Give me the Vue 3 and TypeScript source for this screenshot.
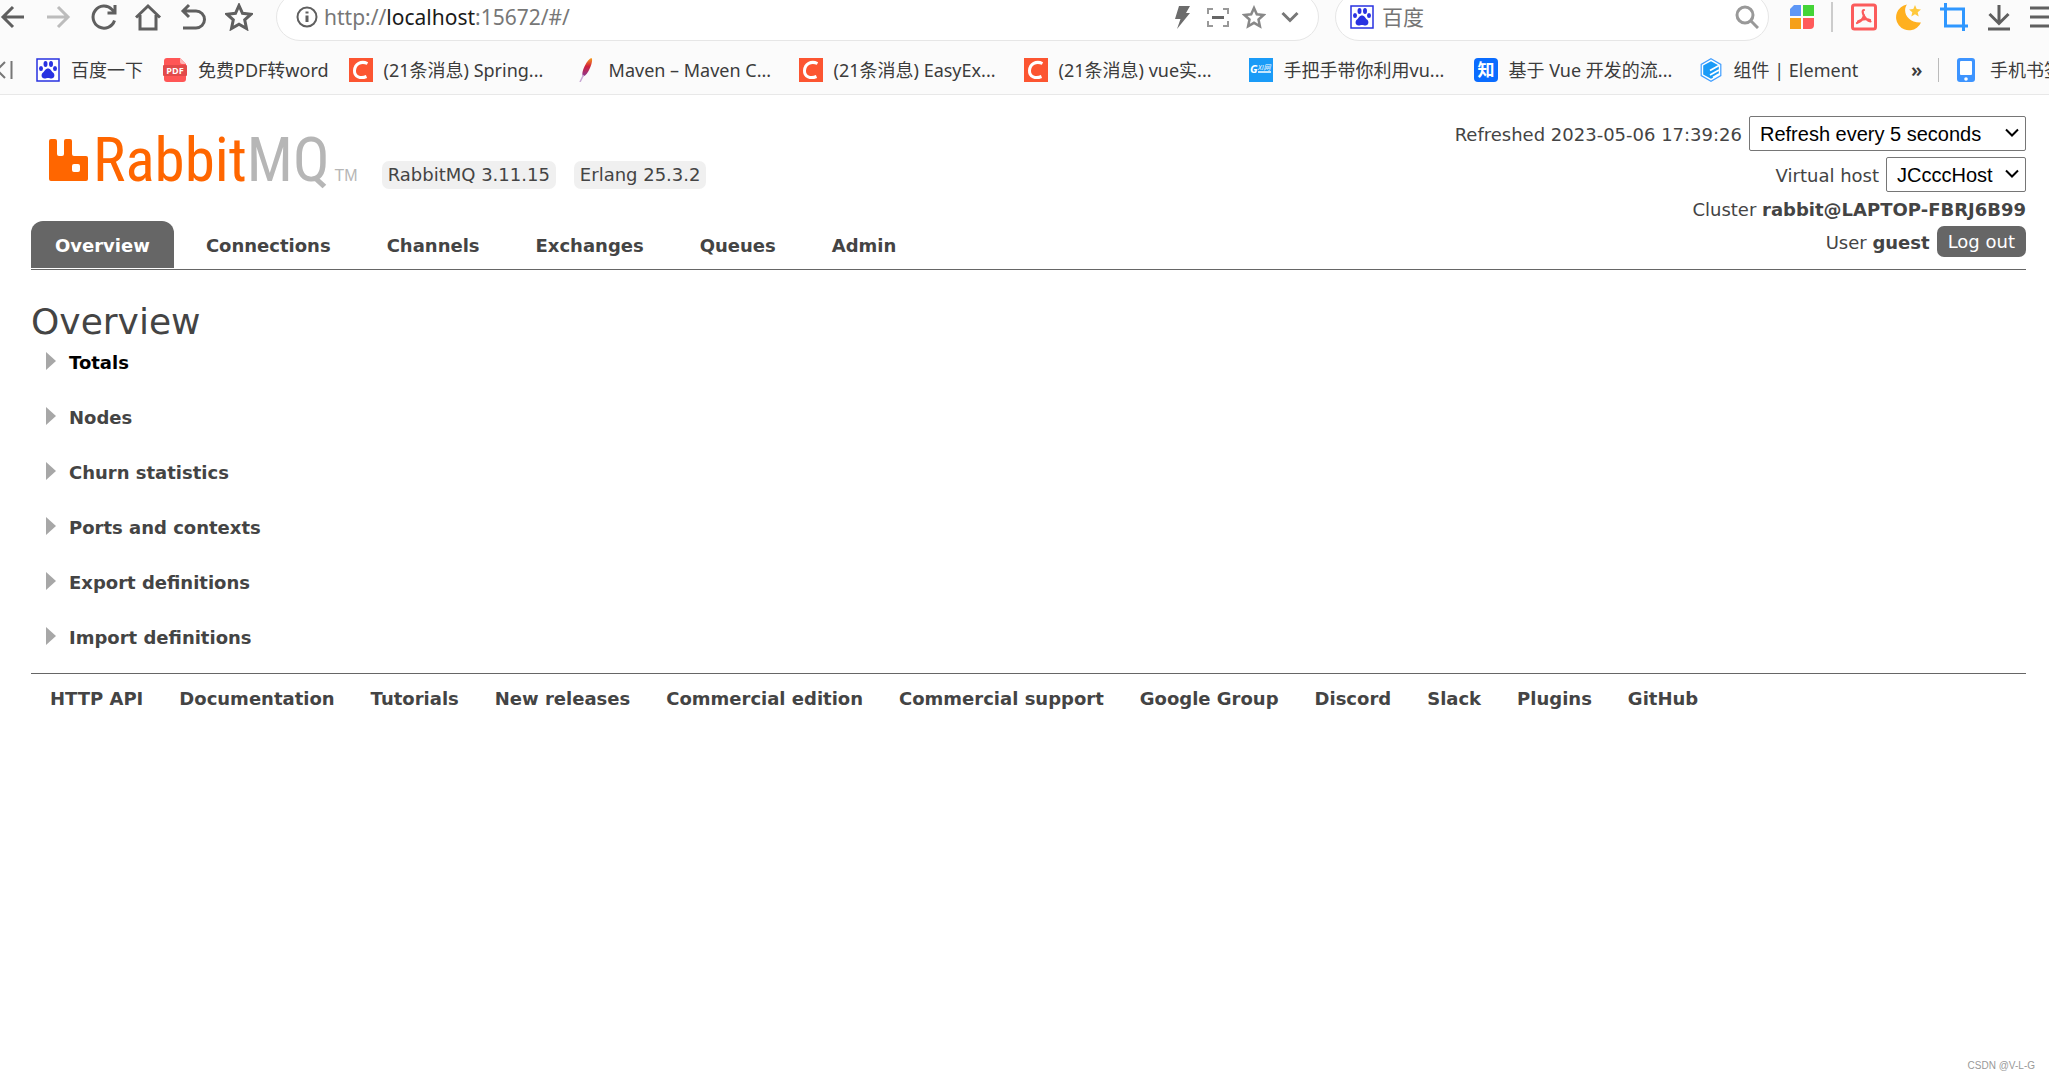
<script setup lang="ts">
import { ref } from 'vue'

interface Bookmark {
  icon: 'baidu' | 'pdf' | 'csdn' | 'feather' | 'gxi' | 'zhihu' | 'element'
  label: string
  wide: boolean
}

const bookmarks: Bookmark[] = [
  { icon: 'baidu', label: '百度一下', wide: false },
  { icon: 'pdf', label: '免费PDF转word', wide: false },
  { icon: 'csdn', label: '(21条消息) Spring...', wide: true },
  { icon: 'feather', label: 'Maven – Maven C...', wide: true },
  { icon: 'csdn', label: '(21条消息) EasyEx...', wide: true },
  { icon: 'csdn', label: '(21条消息) vue实...', wide: true },
  { icon: 'gxi', label: '手把手带你利用vu...', wide: true },
  { icon: 'zhihu', label: '基于 Vue 开发的流...', wide: true },
  { icon: 'element', label: '组件 | Element', wide: false },
]

const tabs: string[] = ['Overview', 'Connections', 'Channels', 'Exchanges', 'Queues', 'Admin']
const activeTab = ref('Overview')

const sections: string[] = [
  'Totals',
  'Nodes',
  'Churn statistics',
  'Ports and contexts',
  'Export definitions',
  'Import definitions',
]

const footerLinks: string[] = [
  'HTTP API',
  'Documentation',
  'Tutorials',
  'New releases',
  'Commercial edition',
  'Commercial support',
  'Google Group',
  'Discord',
  'Slack',
  'Plugins',
  'GitHub',
]

const refresh = ref('Refresh every 5 seconds')
const vhost = ref('JCcccHost')
</script>

<template>
  <div class="browser">
    <div class="toolbar">
      <div class="nav-buttons">
        <button type="button" aria-label="Back">
          <svg width="28" height="28" viewBox="0 0 28 28" class="line"><path d="M13 4 3 14l10 10M3 14h21" /></svg>
        </button>
        <button type="button" aria-label="Forward" class="faded">
          <svg width="28" height="28" viewBox="0 0 28 28" class="line"><path d="M13 4l10 10-10 10M23 14H2" /></svg>
        </button>
        <button type="button" aria-label="Reload">
          <svg width="28" height="28" viewBox="0 0 28 28" class="line"><path d="M24.500 17.500A11 11 0 1 1 22 6.500l2 2M25 2v8H17.500" /></svg>
        </button>
        <button type="button" aria-label="Home">
          <svg width="28" height="28" viewBox="0 0 28 28" class="line"><path d="M1 14.500 13 3l12 11.500M5 12v14h16V12" /></svg>
        </button>
        <button type="button" aria-label="Undo">
          <svg width="28" height="28" viewBox="0 0 28 28" class="line"><path d="M9 2 3 8l6 6M3 8h13a8.500 8.500 0 0 1 0 17H3" /></svg>
        </button>
        <button type="button" aria-label="Favourites">
          <svg width="28" height="28" viewBox="0 0 28 28" class="line"><path d="M14 2.500l3.500 7.800 8.500.9-6.300 5.700 1.800 8.600L14 21.200l-7.500 4.300 1.800-8.600L2 11.200l8.500-.9z" /></svg>
        </button>
      </div>

      <div class="address">
        <svg width="22" height="22" viewBox="0 0 22 22" class="line"><circle cx="11" cy="11" r="9.500" style="stroke-width: 2" /><path d="M11 9.500V16M11 5.500v2" /></svg>
        <div class="url" role="textbox" aria-label="Address" contenteditable="true" spellcheck="false">http://<b>localhost</b>:15672/#/</div>
        <div class="address-tools">
          <button type="button" aria-label="Fast mode">
            <svg width="24" height="24" viewBox="0 0 24 24" fill="#6c6c6c"><path d="M9 1h11l-4 7h4L7 24l3.500-10H5z" /></svg>
          </button>
          <button type="button" aria-label="Scan">
            <svg width="24" height="24" viewBox="0 0 24 24" fill="none" stroke="#999" stroke-width="2"><path d="M7 4H2v5M17 4h5v5M2 16v5h5M22 16v5h-5" /><path d="M6 12.500h12" stroke="#666" stroke-width="3" /></svg>
          </button>
          <button type="button" aria-label="Add bookmark">
            <svg width="24" height="24" viewBox="0 0 24 24" fill="none" stroke="#888" stroke-width="2.500"><path d="M12 3l2.800 6.300 6.700.7-5 4.500 1.400 6.800L12 17.800l-5.900 3.500 1.400-6.800-5-4.500 6.700-.7z" /></svg>
          </button>
          <button type="button" aria-label="More">
            <svg width="24" height="24" viewBox="0 0 24 24" fill="none" stroke="#777" stroke-width="3"><path d="M4.500 8 12 15.500 19.500 8" /></svg>
          </button>
        </div>
      </div>

      <form class="search" @submit.prevent>
        <svg width="24" height="24" viewBox="0 0 24 24"><rect x="1" y="1" width="22" height="22" fill="#fff" stroke="#2932e1" stroke-width="1.500" /><g fill="#2932e1"><ellipse cx="9.500" cy="6" rx="2" ry="3" /><ellipse cx="15" cy="6" rx="2" ry="3" /><ellipse cx="5" cy="10.500" rx="2" ry="2.500" /><ellipse cx="19" cy="10.500" rx="2" ry="2.500" /><path d="M12 10.500c2.500 0 3.200 2.500 5 4 2.500 2 1.500 6-1.500 6-1.500 0-2-.5-3.500-.5s-2 .5-3.500.5c-3 0-4-4-1.500-6 1.800-1.500 2.500-4 5-4z" /></g></svg>
        <input type="text" aria-label="Search" placeholder="百度" />
        <button type="submit" aria-label="Search">
          <svg width="24" height="24" viewBox="0 0 24 24" fill="none" stroke="#999" stroke-width="3"><circle cx="10" cy="10" r="8" /><path d="M16 16l7 7" /></svg>
        </button>
      </form>

      <div class="extensions">
        <button type="button" aria-label="Apps">
          <svg width="24" height="24" viewBox="0 0 24 24"><path d="M4 0h7v11H0V4z" fill="#5e97f6" /><path d="M13 0h11v11H13z" fill="#44d437" /><path d="M0 13h11v11H0z" fill="#f5a019" /><path d="M13 13h11v7a4 4 0 0 1-4 4h-7z" fill="#ff5a5a" /></svg>
        </button>
        <span class="divider"></span>
        <button type="button" aria-label="PDF">
          <svg width="28" height="28" viewBox="0 0 28 28" fill="none" stroke="#fb5c5c" stroke-width="3"><rect x="2.500" y="2" width="23" height="24" rx="2" /><path d="M14 7c-2 0-1.500 3 0 6 1.500 2.800 4 4.800 6.500 5.500M14 12c-.5 3-3 6.500-7 8M8 18.500c3-2 8-3 12-1.500" stroke-width="2.200" stroke-linecap="round" /></svg>
        </button>
        <button type="button" aria-label="Night mode">
          <svg width="28" height="28" viewBox="0 0 28 28"><path d="M12 1.500C7 8 12 20 26 19.500A13 13 0 1 1 12 1.500z" fill="#ffb01f" /><path d="M20 2l1.700 4 4.300.4-3.300 2.800 1 4.300L20 11.200l-3.700 2.300 1-4.300L14 6.400l4.300-.4z" fill="#ffc93c" /></svg>
        </button>
        <button type="button" aria-label="Screenshot">
          <svg width="28" height="28" viewBox="0 0 28 28" fill="none" stroke="#2f97ff" stroke-width="3"><path d="M0 6h23.500v22M5.500 0v23H28" /></svg>
        </button>
        <button type="button" aria-label="Downloads">
          <svg width="28" height="28" viewBox="0 0 28 28" class="line"><path d="M14 2v18M4.500 11l9.500 9.500 9.500-9.500M3 26h22" /></svg>
        </button>
        <button type="button" aria-label="Menu">
          <svg width="28" height="28" viewBox="0 0 28 28" class="line"><path d="M0 5h28M0 14h28M0 23h28" /></svg>
        </button>
      </div>
    </div>

    <div class="bookmarks">
      <button type="button" class="collapse" aria-label="Collapse bookmarks">
        <svg width="13" height="24" viewBox="0 0 13 24" fill="none" stroke="#777" stroke-width="2"><path d="M5 4-3 12l8 8M11.500 3v18" /></svg>
      </button>
      <div class="bookmark-list">
        <a v-for="(item, i) in bookmarks" :key="i" href="#" :class="{ wide: item.wide }">
          <svg v-if="item.icon === 'baidu'" width="24" height="24" viewBox="0 0 24 24"><rect x="1" y="1" width="22" height="22" fill="#fff" stroke="#2932e1" stroke-width="1.500" /><g fill="#2932e1"><ellipse cx="9.500" cy="6" rx="2" ry="3" /><ellipse cx="15" cy="6" rx="2" ry="3" /><ellipse cx="5" cy="10.500" rx="2" ry="2.500" /><ellipse cx="19" cy="10.500" rx="2" ry="2.500" /><path d="M12 10.500c2.500 0 3.200 2.500 5 4 2.500 2 1.500 6-1.500 6-1.500 0-2-.5-3.500-.5s-2 .5-3.500.5c-3 0-4-4-1.500-6 1.800-1.500 2.500-4 5-4z" /></g></svg>
          <svg v-else-if="item.icon === 'pdf'" width="24" height="24" viewBox="0 0 24 24"><path d="M4 0h13l6 6v15a3 3 0 0 1-3 3H4a3 3 0 0 1-3-3V3a3 3 0 0 1 3-3z" fill="#ff5656" /><path d="M17 0l6 6h-4a2 2 0 0 1-2-2z" fill="#ffb3b3" /><rect y="7" width="24" height="11" rx="1" fill="#e24a4a" /><text x="12" y="16" text-anchor="middle" class="icon-text" font-size="9" font-weight="700">PDF</text></svg>
          <svg v-else-if="item.icon === 'csdn'" width="24" height="24" viewBox="0 0 24 24"><rect width="24" height="24" fill="#fc5531" /><path d="M18.500 5.500C12 2.500 6 6 5.500 12.500c-.3 6.500 6 8.500 12 6" fill="none" stroke="#fff" stroke-width="3" /></svg>
          <svg v-else-if="item.icon === 'feather'" width="24" height="24" viewBox="0 0 24 24"><defs><linearGradient id="plume" x1="0" y1="0" x2="0" y2="1"><stop offset="0" stop-color="#f9a01b" /><stop offset=".45" stop-color="#d0213c" /><stop offset="1" stop-color="#8a3a94" /></linearGradient></defs><path d="M17.500 0c1.500 1.500 0 7-2 11-1.500 3.500-3.500 6.500-6.500 7.500-1.500-3 0-7 2-11 1.800-4 4.500-7 6.500-7.500z" fill="url(#plume)" /><path d="M9.500 17 6 24" stroke="#c9a8d4" stroke-width="1.500" /></svg>
          <svg v-else-if="item.icon === 'gxi'" width="24" height="24" viewBox="0 0 24 24"><rect width="24" height="24" fill="#1a9bf7" /><text x="1" y="15" class="icon-text" font-size="11" font-style="italic" font-weight="700">G</text><text x="9" y="12" class="icon-text" font-size="7" font-style="italic">XI网</text><path d="M9 14h13" stroke="#fff" stroke-width="1.500" /></svg>
          <svg v-else-if="item.icon === 'zhihu'" width="24" height="24" viewBox="0 0 24 24"><rect width="24" height="24" rx="4" fill="#0a6cff" /><text x="12" y="18" text-anchor="middle" class="icon-text" font-size="17" font-weight="700">知</text></svg>
          <svg v-else width="24" height="24" viewBox="0 0 24 24"><path d="M12 .8l9.800 5.600v11.200L12 23.200l-9.800-5.600V6.400z" fill="#fff" stroke="#409eff" stroke-width="1.200" /><path d="M12 3.200l7.800 4.400v8.800L12 20.800l-7.800-4.400V7.600z" fill="#1a9bf7" /><path d="M20 7.500l-9 5M20 12l-9 5M20 16l-6 3.500" stroke="#fff" stroke-width="1.800" /></svg>
          <span>{{ item.label }}</span>
        </a>
      </div>
      <div class="bookmark-end">
        <button type="button" class="more" aria-label="More bookmarks">»</button>
        <a href="#" class="mobile">
          <svg width="18" height="24" viewBox="0 0 18 24"><rect width="18" height="24" rx="3" fill="#3d94ff" /><rect x="3" y="3" width="12" height="14" rx="1" fill="#fff" /><circle cx="9" cy="21" r="1.800" fill="#fff" /></svg>
          <span>手机书签</span>
        </a>
      </div>
    </div>
  </div>

  <div class="page">
    <header>
      <div class="brand-side">
        <div class="brand">
          <a href="#" class="logo" aria-label="RabbitMQ">
            <svg width="39" height="42" viewBox="0 0 39 42"><path fill="#f60" fill-rule="evenodd" d="M2 0h4a2 2 0 0 1 2 2v13a2 2 0 0 0 2 2h3a2 2 0 0 0 2-2V2a2 2 0 0 1 2-2h4a2 2 0 0 1 2 2v13a2 2 0 0 0 2 2h12a2 2 0 0 1 2 2v21a2 2 0 0 1-2 2H2a2 2 0 0 1-2-2V2a2 2 0 0 1 2-2zm23 25a2 2 0 0 0-2 2v4a2 2 0 0 0 2 2h4a2 2 0 0 0 2-2v-4a2 2 0 0 0-2-2z" /></svg>
            <span class="word">Rabbit<span class="mq">MQ</span></span>
            <span class="tm">TM</span>
          </a>
          <span class="version">RabbitMQ 3.11.15</span>
          <span class="version">Erlang 25.3.2</span>
        </div>
        <nav class="tabs">
          <a
            v-for="tab in tabs"
            :key="tab"
            href="#"
            :class="{ selected: tab === activeTab }"
            @click.prevent="activeTab = tab"
          >{{ tab }}</a>
        </nav>
      </div>

      <div class="status">
        <div class="row">
          <label for="refresh">Refreshed 2023-05-06 17:39:26</label>
          <div class="select">
            <select id="refresh" v-model="refresh" class="refresh">
              <option>Refresh every 5 seconds</option>
              <option>Do not refresh</option>
            </select>
            <svg width="14" height="10" viewBox="0 0 14 10"><path d="M1 1.500l6 6 6-6" /></svg>
          </div>
        </div>
        <div class="row">
          <label for="vhost">Virtual host</label>
          <div class="select">
            <select id="vhost" v-model="vhost" class="vhost">
              <option>JCcccHost</option>
              <option>All</option>
            </select>
            <svg width="14" height="10" viewBox="0 0 14 10"><path d="M1 1.500l6 6 6-6" /></svg>
          </div>
        </div>
        <div class="cluster">Cluster <b>rabbit@LAPTOP-FBRJ6B99</b></div>
        <div class="row user">
          <span>User <b>guest</b></span>
          <button type="button">Log out</button>
        </div>
      </div>
    </header>

    <main>
      <h1>Overview</h1>
      <h2 v-for="(section, i) in sections" :key="section">
        <button type="button" :class="{ hovered: i === 0 }">
          <svg width="10" height="18" viewBox="0 0 10 18"><path d="M0 0l10 9-10 9z" fill="#a7a7a7" /></svg>
          <span>{{ section }}</span>
        </button>
      </h2>
    </main>

    <footer>
      <a v-for="link in footerLinks" :key="link" href="#">{{ link }}</a>
    </footer>
  </div>

  <div class="watermark">CSDN @V-L-G</div>
</template>

<style>
body {
  background: #fff;
  overflow-x: hidden;
}
</style>

<style scoped>
button {
  margin: 0;
  padding: 0;
  border: 0;
  background: none;
  font: inherit;
  color: inherit;
  cursor: pointer;
}

a {
  color: inherit;
  text-decoration: none;
}

svg {
  display: block;
  flex: none;
}

.line {
  fill: none;
  stroke: #5f5f5f;
  stroke-width: 3;
}

.icon-text {
  fill: #fff;
  font-family: "Open Sans", "Noto Sans CJK SC", sans-serif;
}

.browser {
  background: #fbfbfb;
  border-bottom: 1px solid #e8e8e8;
  font-family: "Noto Sans", "Noto Sans CJK SC", sans-serif;
  overflow: hidden;
}

.toolbar {
  display: flex;
  align-items: center;
  height: 34px;
}

.nav-buttons {
  display: flex;
  gap: 17px;
  width: 276px;
  flex: none;
}

.faded {
  opacity: 0.4;
}

.address,
.search {
  display: flex;
  align-items: center;
  box-sizing: border-box;
  height: 48px;
  border: 1px solid #e6e6e6;
  border-radius: 24px;
  background: #fff;
}

.address {
  flex: 1;
  min-width: 0;
  margin-right: 16px;
  padding: 0 16px 0 19px;
  gap: 6px;
}

.url {
  flex: 1;
  font-size: 21px;
  line-height: 30px;
  color: #777;
  outline: 0;
  white-space: nowrap;
}

.url b {
  font-weight: 400;
  color: #1a1a1a;
}

.address-tools {
  display: flex;
  gap: 12px;
}

.search {
  width: 434px;
  flex: none;
  padding: 0 9px 0 14px;
  gap: 8px;
}

.search input {
  flex: 1;
  min-width: 0;
  padding: 0;
  border: 0;
  outline: 0;
  background: none;
  font-family: inherit;
  font-size: 21px;
  line-height: 30px;
}

.search input::placeholder {
  color: #757575;
}

.extensions {
  display: flex;
  align-items: center;
  gap: 17px;
  width: 259px;
  flex: none;
  padding-left: 21px;
}

.extensions button {
  flex: none;
}

.divider {
  flex: none;
  width: 2px;
  height: 30px;
  background: #ccc;
}

.bookmarks {
  display: flex;
  align-items: center;
  height: 46px;
  padding: 13px 0 1px;
  font-size: 18px;
  line-height: 24px;
  color: #3c3c3c;
  white-space: nowrap;
}

.collapse {
  margin-right: 23px;
}

.bookmark-list {
  display: flex;
  flex: 1;
  min-width: 0;
  gap: 20px;
  overflow: hidden;
}

.bookmark-list a,
.mobile {
  display: flex;
  flex: none;
  align-items: center;
  gap: 11px;
}

.bookmark-list .wide {
  width: 205px;
}

.bookmark-end {
  display: flex;
  flex: none;
  align-items: center;
  width: 138px;
}

.more {
  flex: none;
  width: 27px;
  text-align: left;
  font-size: 20px;
  font-weight: 600;
}

.mobile {
  padding-left: 18px;
  border-left: 1px solid #bbb;
}

.mobile span {
  padding-left: 4px;
}

.page {
  padding: 0 23px 0 31px;
  font-family: "DejaVu Sans", sans-serif;
  font-size: 18px;
  line-height: 22px;
  color: #444;
}

header {
  display: flex;
  justify-content: space-between;
  height: 174px;
  border-bottom: 1px solid #666;
}

.brand-side {
  display: flex;
  flex-direction: column;
  justify-content: space-between;
}

.brand {
  display: flex;
  align-items: baseline;
  gap: 18px;
  padding: 35px 0 0 18px;
}

.logo {
  display: flex;
  align-items: baseline;
  gap: 5px;
  margin-right: 6px;
  color: #f60;
}

.word {
  font-family: "Liberation Sans Narrow", "Roboto Condensed", "DejaVu Sans Condensed", sans-serif;
  font-size: 61px;
  font-weight: 400;
  line-height: 60px;
}

.mq,
.tm {
  color: #b6b6b6;
}

.tm {
  font-family: "Liberation Sans", sans-serif;
  font-size: 16px;
}

.version {
  padding: 3px 6px;
  border-radius: 7px;
  background: #f0f0f0;
}

.tabs {
  display: flex;
  gap: 8px;
  margin-bottom: 1px;
  font-weight: 700;
}

.tabs a {
  padding: 14px 24px 11px;
  border-radius: 12px 12px 0 0;
}

.tabs .selected {
  background: #666;
  color: #fff;
}

.status {
  padding-top: 21px;
  white-space: nowrap;
}

.row {
  display: flex;
  align-items: center;
  justify-content: flex-end;
  gap: 7px;
  margin-bottom: 6px;
}

.row label,
.row > span {
  padding-top: 2px;
}

.select {
  position: relative;
}

.select select {
  display: block;
  box-sizing: border-box;
  height: 35px;
  padding: 0 0 0 10px;
  border: 1px solid #767676;
  border-radius: 2px;
  background: #fff;
  appearance: none;
  font-family: "Liberation Sans", sans-serif;
  font-size: 20px;
  color: #000;
}

.select .refresh {
  width: 277px;
}

.select .vhost {
  width: 140px;
}

.select svg {
  position: absolute;
  top: 12px;
  right: 7px;
  fill: none;
  stroke: #000;
  stroke-width: 2;
  pointer-events: none;
}

.cluster {
  padding-top: 1px;
  margin-bottom: 5px;
  text-align: right;
}

.user button {
  padding: 5px 11px 4px;
  border-radius: 7px;
  background: #666;
  color: #fff;
}

h1 {
  margin: 0;
  padding: 30px 0 8px;
  font-size: 36px;
  font-weight: 400;
  line-height: 44px;
}

h2 {
  margin: 0 0 33px;
  padding-left: 15px;
  font-size: 18px;
  line-height: 22px;
}

h2:last-child {
  margin-bottom: 24px;
}

h2 button {
  display: flex;
  gap: 13px;
}

.hovered {
  color: #000;
}

footer {
  display: flex;
  flex-wrap: wrap;
  gap: 36px;
  padding: 14px 19px;
  border-top: 1px solid #666;
  font-weight: 700;
}

.watermark {
  position: absolute;
  right: 14px;
  bottom: 6px;
  font-family: "Liberation Sans", sans-serif;
  font-size: 10px;
  line-height: 16px;
  color: #999;
}
</style>
